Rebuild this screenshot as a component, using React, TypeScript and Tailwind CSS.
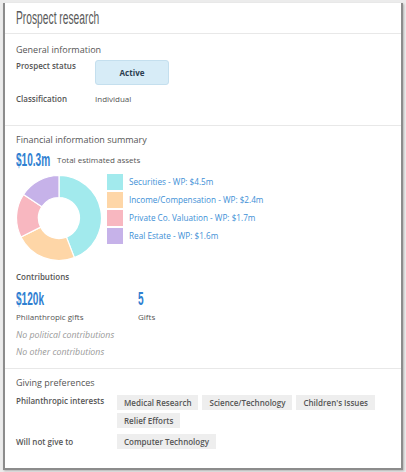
import React from "react";

const segs = [
  { v: 4.5, c: "#a2eaed", label: "Securities - WP: $4.5m" },
  { v: 2.4, c: "#fed6a7", label: "Income/Compensation - WP: $2.4m" },
  { v: 1.7, c: "#f8b7c0", label: "Private Co. Valuation - WP: $1.7m" },
  { v: 1.6, c: "#c6b2e9", label: "Real Estate - WP: $1.6m" },
];

function Donut() {
  const total = segs.reduce((a, s) => a + s.v, 0);
  const cx = 43, cy = 43, R = 42.5, r = 20.5;
  let acc = 0;
  const pt = (ang: number, rad: number) => {
    const a = (ang - 90) * (Math.PI / 180);
    return [cx + rad * Math.cos(a), cy + rad * Math.sin(a)];
  };
  return (
    <svg width="86" height="86" viewBox="0 0 86 86" className="block">
      {segs.map((s, i) => {
        const a0 = (acc / total) * 360;
        acc += s.v;
        const a1 = (acc / total) * 360;
        const large = a1 - a0 > 180 ? 1 : 0;
        const [x0, y0] = pt(a0, R);
        const [x1, y1] = pt(a1, R);
        const [x2, y2] = pt(a1, r);
        const [x3, y3] = pt(a0, r);
        const d = `M${x0} ${y0} A${R} ${R} 0 ${large} 1 ${x1} ${y1} L${x2} ${y2} A${r} ${r} 0 ${large} 0 ${x3} ${y3} Z`;
        return <path key={i} d={d} fill={s.c} stroke="#ffffff" strokeWidth="1.2" />;
      })}
    </svg>
  );
}

function Chip({ children }: { children: React.ReactNode }) {
  return (
    <span className="inline-flex h-[15px] items-center bg-[#eeeeee] px-[7px] text-[8px] font-semibold text-[#555]">
      {children}
    </span>
  );
}

export default function App() {
  return (
    <div
      className="h-[472px] w-[406px] bg-[#ececec] pl-[3px] pt-[3px]"
      style={{ fontFamily: '"Open Sans", "Liberation Sans", sans-serif' }}
    >
      <div className="h-[467px] w-[400px] border-x-2 border-b-2 border-[#8c8c8c] bg-white shadow-[1px_1px_2px_rgba(0,0,0,0.25)]">
        {/* Header */}
        <div className="flex h-[31px] items-center border-b border-[#e8e8e8] pl-[11px]">
          <span
            className="inline-block origin-left scale-x-[0.57] whitespace-nowrap text-[18px] font-light leading-none text-[#5a5a5a]"
            style={{ fontFamily: '"Liberation Sans", sans-serif' }}
          >
            Prospect research
          </span>
        </div>

        {/* General information */}
        <div className="h-[92px] border-b border-[#e8e8e8] px-[11px] pt-[9px]">
          <div className="text-[9px] leading-[14px] text-[#555]">General information</div>
          <div className="mt-[3px] flex">
            <div className="w-[79px] text-[8px] font-semibold leading-[12px] text-[#555]">Prospect status</div>
            <div className="flex h-[25px] w-[74px] items-center justify-center rounded-[3px] border border-[#c4dfee] bg-[#d7ecf7] text-[8px] font-bold text-[#2c3e50]">
              Active
            </div>
          </div>
          <div className="mt-[8px] flex">
            <div className="w-[79px] text-[8px] font-semibold leading-[12px] text-[#555]">Classification</div>
            <div className="text-[8px] leading-[12px] text-[#555]">Individual</div>
          </div>
        </div>

        {/* Financial information */}
        <div className="h-[243px] border-b border-[#e8e8e8] px-[11px] pt-[8px]">
          <div className="text-[9px] leading-[12px] text-[#555]">Financial information summary</div>
          <div className="mt-[4px] flex h-[20px] items-center">
            <span
              className="mr-[-27px] inline-block origin-left scale-x-[0.56] text-[18px] font-bold leading-none text-[#2f80d1]"
              style={{ fontFamily: '"Liberation Sans", sans-serif' }}
            >
              $10.3m
            </span>
            <span className="ml-[7px] text-[8px] text-[#555]">Total estimated assets</span>
          </div>
          <div className="mt-[4px] flex items-start">
            <div className="mt-[1px]">
              <Donut />
            </div>
            <div className="ml-[5px] flex flex-col gap-[2px]">
              {segs.map((s) => (
                <div key={s.label} className="flex h-[16px] items-center">
                  <span className="h-[16px] w-[16px]" style={{ backgroundColor: s.c }} />
                  <span className="ml-[6px] text-[8.2px] text-[#3d8fd6]">{s.label}</span>
                </div>
              ))}
            </div>
          </div>

          <div className="mt-[10px] text-[8px] font-semibold leading-[12px] text-[#555]">Contributions</div>
          <div className="mt-[4px] flex">
            <div className="w-[122px]">
              <div
                className="inline-block h-[18px] origin-left scale-x-[0.56] text-[18px] font-bold leading-[18px] text-[#2f80d1]"
                style={{ fontFamily: '"Liberation Sans", sans-serif' }}
              >
                $120k
              </div>
              <div className="text-[8px] leading-[12px] text-[#555]">Philanthropic gifts</div>
            </div>
            <div>
              <div
                className="inline-block h-[18px] origin-left scale-x-[0.56] text-[18px] font-bold leading-[18px] text-[#2f80d1]"
                style={{ fontFamily: '"Liberation Sans", sans-serif' }}
              >
                5
              </div>
              <div className="text-[8px] leading-[12px] text-[#555]">Gifts</div>
            </div>
          </div>
          <div className="mt-[6px] text-[8.8px] italic leading-[12px] text-[#999]">No political contributions</div>
          <div className="mt-[5px] text-[8.8px] italic leading-[12px] text-[#999]">No other contributions</div>
        </div>

        {/* Giving preferences */}
        <div className="px-[11px] pt-[8px]">
          <div className="text-[9px] leading-[12px] text-[#555]">Giving preferences</div>
          <div className="mt-[6px] flex">
            <div className="w-[101px] text-[8px] font-semibold leading-[12px] text-[#555]">Philanthropic interests</div>
            <div className="flex w-[270px] flex-wrap gap-x-[4px] gap-y-[3px]">
              <Chip>Medical Research</Chip>
              <Chip>Science/Technology</Chip>
              <Chip>Children's Issues</Chip>
              <Chip>Relief Efforts</Chip>
            </div>
          </div>
          <div className="mt-[6px] flex items-center">
            <div className="w-[101px] text-[8px] font-semibold leading-[12px] text-[#555]">Will not give to</div>
            <Chip>Computer Technology</Chip>
          </div>
        </div>
      </div>
    </div>
  );
}
